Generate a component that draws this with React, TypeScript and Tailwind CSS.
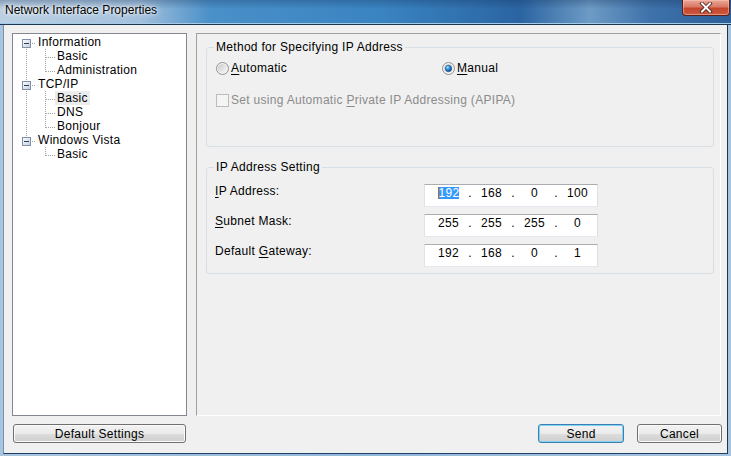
import React from 'react';

type TreeRow = {
  label: string;
  level: 0 | 1;
  up?: boolean;
  down?: boolean;
  rootLine?: boolean;
  last?: boolean;
  selected?: boolean;
};

const rows: TreeRow[] = [
  { label: 'Information', level: 0, up: false, down: true },
  { label: 'Basic', level: 1, rootLine: true },
  { label: 'Administration', level: 1, rootLine: true, last: true },
  { label: 'TCP/IP', level: 0, up: true, down: true },
  { label: 'Basic', level: 1, rootLine: true, selected: true },
  { label: 'DNS', level: 1, rootLine: true },
  { label: 'Bonjour', level: 1, rootLine: true, last: true },
  { label: 'Windows Vista', level: 0, up: true, down: false },
  { label: 'Basic', level: 1, rootLine: false, last: true },
];

// dotted connector pixels, every other pixel
const dotsV = (x: number, y1: number, y2: number) => {
  const out: React.ReactElement[] = [];
  for (let y = y1; y <= y2; y++) {
    if (y % 2 === 0) out.push(<rect key={`v${x}-${y}`} x={x} y={y} width={1} height={1} fill="#a0a0a0" />);
  }
  return out;
};

const dotsH = (y: number, x1: number, x2: number) => {
  const out: React.ReactElement[] = [];
  for (let x = x1; x <= x2; x++) {
    if (x % 2 === 1) out.push(<rect key={`h${y}-${x}`} x={x} y={y} width={1} height={1} fill="#a0a0a0" />);
  }
  return out;
};

const RootGutter = ({ up, down }: { up?: boolean; down?: boolean }) => (
  <svg width={23} height={14} className="shrink-0" shapeRendering="crispEdges">
    {up && dotsV(13, 0, 3)}
    {down && dotsV(13, 13, 13)}
    {dotsH(8, 18, 22)}
    <defs>
      <linearGradient id="boxg" x1="0" y1="0" x2="1" y2="1">
        <stop offset="0" stopColor="#ffffff" />
        <stop offset="1" stopColor="#c3cbd8" />
      </linearGradient>
    </defs>
    <rect x={9.5} y={4.5} width={8} height={8} fill="url(#boxg)" stroke="#7f90a8" />
    <rect x={11} y={8} width={5} height={1} fill="#22406a" />
  </svg>
);

const ChildGutter = ({ rootLine, last }: { rootLine?: boolean; last?: boolean }) => (
  <svg width={42} height={14} className="shrink-0" shapeRendering="crispEdges">
    {rootLine && dotsV(13, 0, 13)}
    {dotsV(32, 0, last ? 8 : 13)}
    {dotsH(8, 33, 41)}
  </svg>
);

const Tree = () => (
  <div className="w-[175px] h-[383px] bg-white border border-[#828790] pt-px">
    {rows.map((r, i) => (
      <div key={i} className="flex h-[14px] items-start">
        {r.level === 0 ? <RootGutter up={r.up} down={r.down} /> : <ChildGutter rootLine={r.rootLine} last={r.last} />}
        <span className={`px-[2px] leading-[14px] h-[14px] whitespace-nowrap ${r.selected ? 'bg-[#ececec]' : ''}`}>
          {r.label}
        </span>
      </div>
    ))}
  </div>
);

const Radio = ({ checked }: { checked?: boolean }) => (
  <svg width={13} height={13} className="shrink-0">
    <defs>
      <linearGradient id="ring" x1="0" y1="0" x2="1" y2="1">
        <stop offset="0" stopColor="#c9c9c9" />
        <stop offset="1" stopColor="#f9f9f9" />
      </linearGradient>
      <radialGradient id="dot" cx="0.35" cy="0.3" r="0.75">
        <stop offset="0" stopColor="#bfe9ff" />
        <stop offset="0.45" stopColor="#2a8fd6" />
        <stop offset="1" stopColor="#0b4a8c" />
      </radialGradient>
    </defs>
    <circle cx={6.5} cy={6.5} r={6} fill="#f4f4f4" stroke="#8e8f8f" />
    <circle cx={6.5} cy={6.5} r={4.5} fill="url(#ring)" />
    {checked && <circle cx={6.5} cy={6.5} r={3.2} fill="url(#dot)" stroke="#1a4f80" strokeWidth={0.6} />}
  </svg>
);

const IpField = ({ parts, selectFirst }: { parts: string[]; selectFirst?: boolean }) => (
  <div className="w-[174px] h-[23px] bg-white border border-t-[#abadb3] border-l-[#e2e3ea] border-r-[#dbdfe6] border-b-[#e3e9ef] flex items-start pl-[6px] pt-px leading-[14px]">
    {parts.map((p, i) => (
      <React.Fragment key={i}>
        {i > 0 && <span className="w-[8px] text-center">.</span>}
        <span className="w-[35px] text-center">
          {selectFirst && i === 0 ? (
            <span className="bg-[#3399ff] text-white border-l border-[#b8662c] inline-block leading-[12px] mt-px">{p}</span>
          ) : (
            p
          )}
        </span>
      </React.Fragment>
    ))}
  </div>
);

const btnBase =
  'h-[19px] rounded-[3px] border text-[12px] leading-none bg-[linear-gradient(#f2f2f2_0%,#ebebeb_50%,#dddddd_50%,#cfcfcf_100%)]';

export default function App() {
  return (
    <div className="w-[731px] h-[456px] flex flex-col bg-[linear-gradient(to_right,#a9c5df,#93b7da_50%,#a7c3de)] font-['Liberation_Sans',Arial,sans-serif] text-[12px] text-black overflow-hidden">
      {/* title bar */}
      <div className="h-[23px] flex items-start justify-between bg-[linear-gradient(to_bottom,rgba(20,50,90,0.3)_0px,rgba(20,50,90,0)_9px),linear-gradient(to_right,#bcd0e2_0px,#a3c0dc_140px,#4a90c9_210px,#3a84c2_380px,#2b64a2_520px,#6e9bc5_590px,#3e72aa_650px,#2d5f98_731px)]">
        <div className="pl-[5px] pt-[3px] leading-[14px] [text-shadow:0_0_6px_#ffffff,0_0_3px_#ffffff]">
          Network Interface Properties
        </div>
        <div className="mr-px w-[48px] h-[16px] rounded-b-[4px] border border-t-0 border-[#5b2019] bg-[linear-gradient(#eaa896_0%,#d97a66_45%,#c5452c_55%,#cb5b40_100%)] shadow-[inset_0_0_0_1px_rgba(255,200,190,0.5)] flex items-center justify-center">
          <svg width={14} height={11} viewBox="0 0 14 11">
            <path d="M3 1.5 L11 9.5 M11 1.5 L3 9.5" stroke="#4a1a14" strokeWidth={3.6} strokeLinecap="square" />
            <path d="M3 1.5 L11 9.5 M11 1.5 L3 9.5" stroke="#ffffff" strokeWidth={2} strokeLinecap="square" />
          </svg>
        </div>
      </div>
      <div className="h-px bg-[#a4cbe8]" />
      <div className="h-px bg-[#1b3553]" />

      {/* frame + client */}
      <div className="flex-1 flex px-[3px] pb-[2px]">
        <div className="flex-1 flex flex-col bg-[#f0f0f0] border-l border-r border-b border-l-[#7792ad] border-r-[#1b3554] border-b-[#1f4166] pl-[8px] pt-[8px] tracking-[0.3px]">
          <div className="flex gap-[9px] h-[383px]">
            <Tree />

            <div className="w-[525px] h-[383px] border border-l-[#a0a0a0] border-t-[#a0a0a0] border-r-white border-b-white">
              <fieldset className="ml-[9px] mt-[6px] w-[508px] border border-[#d5dfe5] rounded-[3px] pb-[39px]">
                <legend className="ml-[7px] px-[2px] leading-[14px]">Method for Specifying IP Address</legend>
                <div className="mt-[7px] pl-[9px] flex items-center h-[14px]">
                  <div className="w-[226px] flex items-center gap-[2px]">
                    <Radio />
                    <span className="leading-[14px]">
                      <span className="underline underline-offset-2">A</span>utomatic
                    </span>
                  </div>
                  <div className="flex items-center gap-[2px]">
                    <Radio checked />
                    <span className="leading-[14px]">
                      <span className="underline underline-offset-2">M</span>anual
                    </span>
                  </div>
                </div>
                <div className="mt-[18px] pl-[9px] flex items-center gap-[2px] h-[14px]">
                  <span className="w-[13px] h-[13px] border border-[#bcbcbc] bg-[#f4f4f4] shrink-0" />
                  <span className="leading-[14px] text-[#8b8b8b]">
                    Set using Automatic <span className="underline underline-offset-2">P</span>rivate IP Addressing (APIPA)
                  </span>
                </div>
              </fieldset>

              <fieldset className="ml-[9px] mt-[13px] w-[508px] border border-[#d5dfe5] rounded-[3px] pb-[6px]">
                <legend className="ml-[7px] px-[2px] leading-[14px]">IP Address Setting</legend>
                <div className="mt-[10px] pl-[8px] flex flex-col gap-[7px]">
                  <div className="flex items-start">
                    <span className="w-[209px] leading-[14px]">
                      <span className="underline underline-offset-2">I</span>P Address:
                    </span>
                    <IpField parts={['192', '168', '0', '100']} selectFirst />
                  </div>
                  <div className="flex items-start">
                    <span className="w-[209px] leading-[14px]">
                      <span className="underline underline-offset-2">S</span>ubnet Mask:
                    </span>
                    <IpField parts={['255', '255', '255', '0']} />
                  </div>
                  <div className="flex items-start">
                    <span className="w-[209px] leading-[14px]">
                      Default <span className="underline underline-offset-2">G</span>ateway:
                    </span>
                    <IpField parts={['192', '168', '0', '1']} />
                  </div>
                </div>
              </fieldset>
            </div>
          </div>

          <div className="mt-[8px] flex items-start">
            <button type="button" className={`${btnBase} ml-px w-[173px] border-[#707070] shadow-[inset_0_0_0_1px_#fbfbfb]`}>
              Default Settings
            </button>
            <button type="button" className={`${btnBase} ml-auto w-[86px] border-[#3c7fb1] shadow-[inset_0_0_0_1px_#7fd4f6]`}>
              Send
            </button>
            <button type="button" className={`${btnBase} ml-[13px] mr-[5px] w-[85px] border-[#707070] shadow-[inset_0_0_0_1px_#fbfbfb]`}>
              Cancel
            </button>
          </div>
        </div>
      </div>
    </div>
  );
}
